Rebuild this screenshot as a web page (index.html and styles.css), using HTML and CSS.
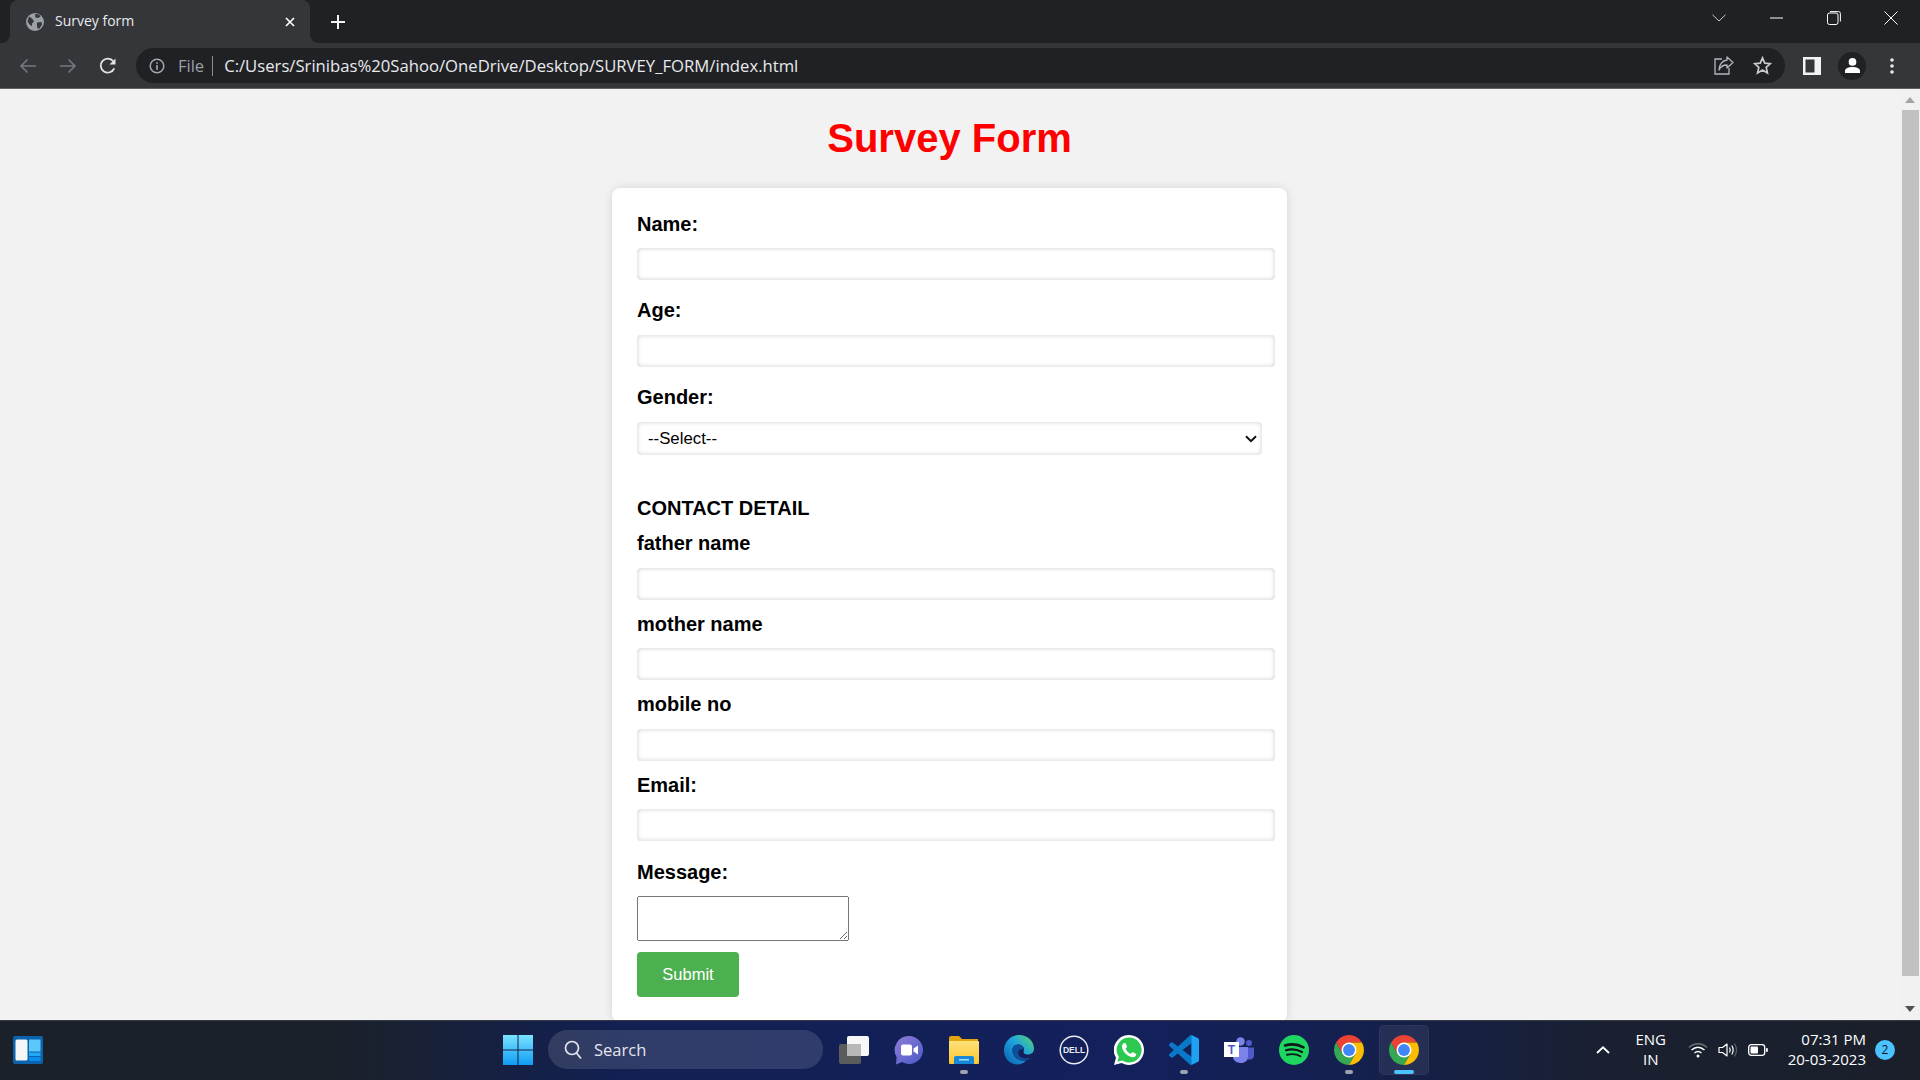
FILE: index.html
```html
<!DOCTYPE html>
<html lang="en">
<head>
<meta charset="utf-8">
<title>Survey form</title>
<link rel="stylesheet" href="styles.css">
</head>
<body>
<div class="window">
  <header class="tabstrip">
    <div class="tab">
      <svg class="favicon" viewBox="0 0 18 18"><circle cx="9" cy="9" r="9" fill="#9aa0a6"/><path d="M3 3.5 6.5 6 8 8.5 6 10.5 6 13 4 12 1.5 8.5ZM9 1 13 1.5 14.5 3.5 12 5 9.5 4.5ZM11 9.5 15.5 9 16 11.5 13.5 15.5 11.5 15.5 11 12.5Z" fill="#35363a"/></svg>
      <span class="tab-title">Survey form</span>
      <svg class="tab-close" viewBox="0 0 10 10"><path d="M1 1 9 9M9 1 1 9" stroke="#fff" stroke-width="1.7"/></svg>
    </div>
    <div class="new-tab"><svg viewBox="0 0 14 14" width="14" height="14"><path d="M7 0V14M0 7H14" stroke="#f1f3f4" stroke-width="2"/></svg></div>
    <div class="win-controls">
      <div class="win-btn"><svg viewBox="0 0 14 8" width="14" height="8"><path d="M.5.8 7 7 13.5.8" fill="none" stroke="#c8cacc" stroke-width="1"/></svg></div>
      <div class="win-btn"><svg viewBox="0 0 13 2" width="13" height="2"><path d="M0 1H13" stroke="#fff" stroke-width="1"/></svg></div>
      <div class="win-btn"><svg viewBox="0 0 14 14" width="14" height="14"><rect x=".5" y="2" width="10.5" height="11.5" rx="2" fill="none" stroke="#fff"/><path d="M3 .6H11.5Q13.4.6 13.4 2.5V10.5" fill="none" stroke="#fff"/></svg></div>
      <div class="win-btn"><svg viewBox="0 0 14 14" width="14" height="14"><path d="M.5.5 13.5 13.5M13.5.5 .5 13.5" stroke="#fff" stroke-width="1"/></svg></div>
    </div>
  </header>

  <nav class="toolbar">
    <div class="nav-btn"><svg viewBox="0 0 18 16" width="18" height="16"><path d="M17 8H2M8.5 1.5 2 8l6.5 6.5" fill="none" stroke="#75787c" stroke-width="1.6"/></svg></div>
    <div class="nav-btn"><svg viewBox="0 0 18 16" width="18" height="16"><path d="M1 8H16M9.500 1.500 16 8l-6.500 6.500" fill="none" stroke="#75787c" stroke-width="1.600"/></svg></div>
    <div class="nav-btn"><svg viewBox="0 0 18 18" width="18" height="18"><path d="M15.200 11.300A7 7 0 1 1 14.300 4.300" fill="none" stroke="#e3e5e8" stroke-width="1.800"/><path d="M16.500 1.500V7.500H10.500Z" fill="#e3e5e8"/></svg></div>
    <div class="omnibox">
      <svg class="info" viewBox="0 0 16 16" width="16" height="16"><circle cx="8" cy="8" r="6.800" fill="none" stroke="#a4a7ab" stroke-width="1.500"/><rect x="7.200" y="7" width="1.600" height="4.800" fill="#a4a7ab"/><rect x="7.200" y="4.200" width="1.600" height="1.600" fill="#a4a7ab"/></svg>
      <span class="scheme">File</span>
      <span class="divider"></span>
      <span class="url">C:/Users/Srinibas%20Sahoo/OneDrive/Desktop/SURVEY_FORM/index.html</span>
      <div class="omni-actions">
        <div class="omni-btn"><svg viewBox="0 0 20 19" width="20" height="19"><path d="M8 3H1V18H15V12" fill="none" stroke="#b3b6ba" stroke-width="1.300"/><path d="M13 1 19 6.500 13 12V9C9 9 6.500 10.500 5 14 5 9 8 4.500 13 4Z" fill="none" stroke="#b3b6ba" stroke-width="1.300" stroke-linejoin="round"/></svg></div>
        <div class="omni-btn"><svg viewBox="0 0 20 20" width="19" height="19"><path d="M10 2 12.400 7.500 18.300 8 13.900 12 15.200 17.900 10 14.800 4.800 17.900 6.100 12 1.700 8 7.600 7.500Z" fill="none" stroke="#c7cacd" stroke-width="1.800" stroke-linejoin="miter"/></svg></div>
      </div>
    </div>
    <div class="tool-btn"><svg viewBox="0 0 18 18" width="18" height="18"><rect width="18" height="18" fill="#f1f3f4"/><rect x="2.500" y="2.500" width="9" height="13" fill="#35363a"/></svg></div>
    <div class="tool-btn"><span class="avatar"><svg viewBox="0 0 18 16" width="17" height="15"><circle cx="9" cy="4.200" r="4.100" fill="#fff"/><path d="M1 16V13.500C1 11 5 9.500 9 9.500S17 11 17 13.500V16Z" fill="#fff"/></svg></span></div>
    <div class="tool-btn"><svg viewBox="0 0 4 16" width="4" height="16"><circle cx="2" cy="2" r="1.800" fill="#e8eaed"/><circle cx="2" cy="8" r="1.800" fill="#e8eaed"/><circle cx="2" cy="14" r="1.800" fill="#e8eaed"/></svg></div>
  </nav>

  <div class="viewport">
    <main class="page">
      <h1 class="title">Survey Form</h1>
      <form class="card">
        <div class="field">
          <label class="label gap-12">Name:</label>
          <input class="text-input" type="text">
        </div>
        <div class="field">
          <label class="label gap-13">Age:</label>
          <input class="text-input" type="text">
        </div>
        <div class="field field-gender">
          <label class="label gap-13">Gender:</label>
          <select class="select"><option>--Select--</option></select>
        </div>
        <h2 class="section">CONTACT DETAIL</h2>
        <div class="field field-tight">
          <label class="label gap-13">father name</label>
          <input class="text-input" type="text">
        </div>
        <div class="field field-tight">
          <label class="label gap-12">mother name</label>
          <input class="text-input" type="text">
        </div>
        <div class="field field-tight">
          <label class="label gap-13">mobile no</label>
          <input class="text-input" type="text">
        </div>
        <div class="field field-email">
          <label class="label gap-12">Email:</label>
          <input class="text-input" type="text">
        </div>
        <div class="field field-message">
          <label class="label gap-12">Message:</label>
          <textarea class="textarea"></textarea>
        </div>
        <button class="submit" type="button">Submit</button>
      </form>
    </main>
    <aside class="scrollbar">
      <svg class="arrow-up" viewBox="0 0 10 6" width="10" height="6"><path d="M5 0 10 6H0Z" fill="#a3a3a3"/></svg>
      <div class="thumb"></div>
      <svg class="arrow-down" viewBox="0 0 10 6" width="10" height="6"><path d="M0 0H10L5 6Z" fill="#505050"/></svg>
    </aside>
  </div>

  <footer class="taskbar">
    <div class="widgets">
      <svg viewBox="0 0 30 28" width="30" height="28"><rect width="30" height="28" rx="2" fill="#0b63ad"/><rect x="2.500" y="3.500" width="12" height="21" rx="1.500" fill="#f5f6f7"/><rect x="16" y="3.500" width="11.500" height="12" fill="#5cc8fa"/><rect x="16" y="16.500" width="11.500" height="3.500" fill="#25a8f4"/><rect x="16" y="21" width="11.500" height="4" fill="#0a8cec"/></svg>
    </div>
    <div class="task-item start">
      <svg viewBox="0 0 30 30" width="30" height="30"><defs><linearGradient id="win" x1="0" y1="0" x2="0" y2="1"><stop offset="0" stop-color="#7ae3ff"/><stop offset="1" stop-color="#0f9cf5"/></linearGradient></defs><path d="M0 0H14.500V14.500H0ZM15.500 0H30V14.500H15.500ZM0 15.500H14.500V30H0ZM15.500 15.500H30V30H15.500Z" fill="url(#win)"/></svg>
    </div>
    <div class="search">
      <svg viewBox="0 0 18 20" width="18" height="20"><circle cx="8" cy="8" r="6.500" fill="none" stroke="#e4e6ee" stroke-width="1.700"/><path d="M12.500 13 17 18.500" stroke="#e4e6ee" stroke-width="1.700"/></svg>
      <span class="search-text">Search</span>
    </div>
    <div class="task-list">
      <div class="task-item">
        <svg viewBox="0 0 30 28" width="30" height="28"><rect x="0" y="8" width="22" height="20" rx="2" fill="#5c5c5c"/><rect x="8" y="0" width="22" height="20" rx="2" fill="#f7f7f7"/><rect x="8" y="8" width="14" height="12" fill="#b8b8b8"/></svg>
      </div>
      <div class="task-item">
        <svg viewBox="0 0 30 30" width="30" height="30"><defs><linearGradient id="meet" x1="0" y1="0" x2="1" y2="1"><stop offset="0" stop-color="#8f7ed8"/><stop offset="1" stop-color="#4a58c8"/></linearGradient></defs><path d="M15 1A14 14 0 1 1 8 27.100L2 29.500 2.600 22A14 14 0 0 1 15 1Z" fill="url(#meet)"/><rect x="7" y="9.500" width="11" height="11" rx="2" fill="#fff"/><path d="M19.500 13.500 24 10.500V19.500L19.500 16.500Z" fill="#fff"/></svg>
      </div>
      <div class="task-item">
        <svg viewBox="0 0 30 28" width="30" height="28"><defs><linearGradient id="fold" x1="0" y1="0" x2="0" y2="1"><stop offset="0" stop-color="#ffe27a"/><stop offset="1" stop-color="#fbc52f"/></linearGradient></defs><path d="M0 2Q0 0 2 0H10L13 3H29V8H0Z" fill="#e5a50e"/><rect y="5" width="30" height="23" rx="1" fill="url(#fold)"/><path d="M5 28V22Q5 20 7 20H23Q25 20 25 22V28Z" fill="#1787d8"/><rect x="10" y="23" width="10" height="1.500" fill="#9fdcff"/></svg>
        <span class="dot"></span>
      </div>
      <div class="task-item">
        <svg viewBox="0 0 30 30" width="30" height="30"><defs><linearGradient id="edge" x1="0" y1="1" x2="1" y2="0"><stop offset="0" stop-color="#0b5cab"/><stop offset=".55" stop-color="#1fa3e0"/><stop offset="1" stop-color="#58d668"/></linearGradient></defs><path d="M0 14C1 5.500 8 0 15.500 0 24 0 30 6.500 30 13.500 30 18 26.500 19.500 23.500 19.500 19.500 19.500 19 17 20 15 20.500 12 17.500 9.500 14 9.500 10 9.500 8 13 8.500 16.500 9.500 23 16 27 22 25.500 18.500 29.500 13 30.500 8.500 28.500 3 26.500-.5 20.500 0 14Z" fill="url(#edge)"/><path d="M8.500 16.500C9.500 23 16 27 22 25.500 24 25 25.500 24 26.500 22.500 21 25 16 23 14.500 19.500 13 16 16.500 13.500 19.500 14.500 20 12 17.500 9.500 14 9.500 10 9.500 8 13 8.500 16.500Z" fill="#0e4f9c"/></svg>
      </div>
      <div class="task-item">
        <svg viewBox="0 0 30 30" width="30" height="30"><circle cx="15" cy="15" r="13.800" fill="none" stroke="#e9ebef" stroke-width="1.500"/><text x="15" y="18" class="dell-text" text-anchor="middle">DELL</text></svg>
      </div>
      <div class="task-item">
        <svg viewBox="0 0 30 30" width="30" height="30"><path d="M15 0A15 15 0 1 1 7.500 28L0 30 2 22.700A15 15 0 0 1 15 0Z" fill="#fff"/><path d="M15 2.500A12.500 12.500 0 1 1 8.300 25.500L3.500 26.700 4.800 22A12.500 12.500 0 0 1 15 2.500Z" fill="#2cc84f"/><path d="M10.500 8C9.300 8 8 9.500 8 11.500 8 16 13.500 22 19 22.300 21 22.300 22.300 20.800 22.300 19.300 22.300 18.800 19.300 17.200 18.500 17.200 17.800 17.200 17.300 18.700 16.700 18.700 15 18.700 11.700 15 11.700 13.800 11.700 13 13 12.600 13 11.800 13 11 11.800 8 11 8Z" fill="#fff"/></svg>
      </div>
      <div class="task-item">
        <svg viewBox="0 0 24 24" width="30" height="30"><path d="M23.150 2.587 18.210.21a1.494 1.494 0 0 0-1.705.29l-9.460 8.630-4.120-3.128a.999.999 0 0 0-1.276.057L.327 7.261A1 1 0 0 0 .326 8.740L3.899 12 .326 15.260a1 1 0 0 0 .001 1.479L1.650 17.940a.999.999 0 0 0 1.276.057l4.120-3.128 9.460 8.630a1.492 1.492 0 0 0 1.704.29l4.942-2.377A1.500 1.500 0 0 0 24 20.060V3.939a1.500 1.500 0 0 0-.850-1.352zm-5.146 14.861L10.826 12l7.178-5.448v10.896z" fill="#0a78c8"/><path d="M18.004.05 18.210.21 23.150 2.587A1.500 1.500 0 0 1 24 3.939V20.060a1.500 1.500 0 0 1-.850 1.356L18.210 23.790 18.004 23.900V0Z" fill="#1ea2f1"/></svg>
        <span class="dot"></span>
      </div>
      <div class="task-item">
        <svg viewBox="0 0 30 26" width="30" height="26"><circle cx="25" cy="6" r="3" fill="#5059c9"/><path d="M19.500 10.500H30V18C30 22 27 23 24 22.500Z" fill="#5059c9"/><circle cx="16.500" cy="4.500" r="4.300" fill="#7b83eb"/><path d="M9 10H24V20C24 24 20 26 16.500 26 12.500 26 9 23 9 20Z" fill="#7b83eb"/><rect x="0" y="5" width="15" height="15" fill="#fff"/><text x="7.500" y="17" class="teams-text" text-anchor="middle">T</text></svg>
      </div>
      <div class="task-item">
        <svg viewBox="0 0 30 30" width="30" height="30"><circle cx="15" cy="15" r="15" fill="#1ed760"/><path d="M6 10.500C12 8.800 19 9.200 24.500 12.300" fill="none" stroke="#10171a" stroke-width="2.600" stroke-linecap="round"/><path d="M7 15.200C12 13.900 18 14.300 23 17" fill="none" stroke="#10171a" stroke-width="2.200" stroke-linecap="round"/><path d="M8 19.700C12.500 18.700 17.500 19 21.500 21.300" fill="none" stroke="#10171a" stroke-width="1.900" stroke-linecap="round"/></svg>
      </div>
      <div class="task-item">
        <svg viewBox="0 0 48 48" width="30" height="30"><path d="M24 24 13.600 30 3.220 12A24 24 0 0 1 44.780 12H24Z" fill="#ea4335"/><path d="M24 24 34.400 30 24 48A24 24 0 0 1 3.220 12L13.600 30Z" fill="#34a853"/><path d="M24 24V12H44.780A24 24 0 0 1 24 48L34.400 30Z" fill="#fbbc04"/><circle cx="24" cy="24" r="12" fill="#fff"/><circle cx="24" cy="24" r="9.500" fill="#4285f4"/></svg>
        <span class="dot"></span>
      </div>
      <div class="task-item active">
        <svg viewBox="0 0 48 48" width="30" height="30"><path d="M24 24 13.600 30 3.220 12A24 24 0 0 1 44.780 12H24Z" fill="#ea4335"/><path d="M24 24 34.400 30 24 48A24 24 0 0 1 3.220 12L13.600 30Z" fill="#34a853"/><path d="M24 24V12H44.780A24 24 0 0 1 24 48L34.400 30Z" fill="#fbbc04"/><circle cx="24" cy="24" r="12" fill="#fff"/><circle cx="24" cy="24" r="9.500" fill="#4285f4"/></svg>
        <span class="dot dot-active"></span>
      </div>
    </div>
    <div class="tray">
      <svg class="tray-chevron" viewBox="0 0 14 8" width="14" height="8"><path d="M1 7 7 1.300 13 7" fill="none" stroke="#fff" stroke-width="1.800"/></svg>
      <div class="lang"><span>ENG</span><span>IN</span></div>
      <svg class="tray-icon" viewBox="0 0 20 16" width="20" height="16"><path d="M1 5.500C6 .5 14 .5 19 5.500" fill="none" stroke="#6d7178" stroke-width="1.300"/><path d="M3.500 8C7.500 4.500 12.500 4.500 16.500 8" fill="none" stroke="#fff" stroke-width="1.500"/><path d="M6.500 11C8.500 9.300 11.500 9.300 13.500 11" fill="none" stroke="#fff" stroke-width="1.500"/><circle cx="10" cy="14" r="1.500" fill="#fff"/></svg>
      <svg class="tray-icon" viewBox="0 0 20 16" width="20" height="16"><path d="M1 5.500H4.500L9 2V14L4.500 10.500H1Z" fill="none" stroke="#fff" stroke-width="1.200" stroke-linejoin="round"/><path d="M11.500 5.500Q13 8 11.500 10.500M13.800 3.500Q16.500 8 13.800 12.500" fill="none" stroke="#fff" stroke-width="1.200"/><path d="M16.500 1.500Q20.500 8 16.500 14.500" fill="none" stroke="#5c6068" stroke-width="1.200"/></svg>
      <svg class="tray-icon" viewBox="0 0 20 12" width="20" height="12"><rect x=".7" y=".7" width="16" height="10.600" rx="2.500" fill="none" stroke="#fff" stroke-width="1.300"/><rect x="2.500" y="2.500" width="7.500" height="7" rx="1" fill="#fff"/><rect x="18" y="4" width="1.800" height="4" rx=".8" fill="#fff"/></svg>
      <div class="clock"><span>07:31 PM</span><span>20-03-2023</span></div>
      <span class="badge">2</span>
    </div>
  </footer>
</div>
</body>
</html>
```

FILE: styles.css
```css
* { box-sizing: border-box; }

html, body {
  margin: 0;
  height: 100%;
  overflow: hidden;
}

body {
  font-family: "Liberation Sans", Arial, sans-serif;
  color: #000;
}

.window {
  display: flex;
  flex-direction: column;
  width: 1920px;
  height: 1080px;
}

/* Browser chrome */
.tabstrip {
  display: flex;
  align-items: stretch;
  flex: 0 0 43px;
  padding-left: 10px;
  background: #202124;
}

.tab {
  position: relative;
  display: flex;
  align-items: center;
  width: 300px;
  padding: 0 15px 0 16px;
  background: #35363a;
  border-radius: 8px 8px 0 0;
}

.tab::before,
.tab::after {
  content: "";
  position: absolute;
  bottom: 0;
  width: 8px;
  height: 8px;
}

.tab::before {
  left: -8px;
  background: radial-gradient(circle at 0 0, transparent 7.5px, #35363a 8px);
}

.tab::after {
  right: -8px;
  background: radial-gradient(circle at 100% 0, transparent 7.5px, #35363a 8px);
}

.favicon {
  flex: none;
  width: 18px;
  height: 18px;
}

.tab-title {
  margin-left: 11px;
  padding-bottom: 2px;
  font: 14px "Open Sans", sans-serif;
  color: #e8eaed;
}

.tab-close {
  flex: none;
  width: 10px;
  height: 10px;
  margin-left: auto;
}

.new-tab {
  display: flex;
  align-items: center;
  justify-content: center;
  width: 36px;
  margin-left: 10px;
}

.win-controls {
  display: flex;
  margin-left: auto;
}

.win-btn {
  display: flex;
  align-items: center;
  justify-content: center;
  width: 57.5px;
  height: 36px;
}

.toolbar {
  display: flex;
  align-items: center;
  flex: 0 0 46px;
  padding: 0 8px;
  background: #35363a;
  border-bottom: 1px solid #5f6063;
}

.nav-btn,
.tool-btn {
  display: flex;
  flex: none;
  align-items: center;
  justify-content: center;
  width: 40px;
  height: 36px;
}

.omnibox {
  display: flex;
  flex: 1;
  align-items: center;
  height: 35px;
  margin: 0 7px 0 8px;
  padding: 0 3px 0 13px;
  background: #202124;
  border-radius: 18px;
}

.info { flex: none; }

.scheme {
  margin-left: 13px;
  padding-bottom: 1px;
  font: 16.5px "Open Sans", sans-serif;
  color: #9aa0a6;
}

.divider {
  width: 1px;
  height: 20px;
  margin: 0 11px 0 8px;
  background: #8a8d91;
}

.url {
  padding-bottom: 1px;
  font: 16.68px "Open Sans", sans-serif;
  color: #e8eaed;
  white-space: nowrap;
}

.omni-actions {
  display: flex;
  margin-left: auto;
}

.omni-btn {
  display: flex;
  align-items: center;
  justify-content: center;
  width: 39px;
  height: 32px;
}

.avatar {
  display: flex;
  align-items: center;
  justify-content: center;
  width: 28px;
  height: 28px;
  background: #202124;
  border-radius: 50%;
}

/* Page */
.viewport {
  display: flex;
  flex: 1;
  min-height: 0;
  background: #f2f2f2;
}

.page {
  flex: 1;
  min-width: 0;
  padding: 26px 1px 0 0;
  overflow: hidden;
}

.title {
  margin: 0 0 27px;
  font-size: 40px;
  font-weight: 700;
  line-height: 46px;
  text-align: center;
  color: #f00;
}

.card {
  width: 675px;
  margin: 0 auto;
  padding: 25px;
  background: #fff;
  border-radius: 8px;
  box-shadow: 0 0 10px rgba(0, 0, 0, .12);
}

.field { margin-bottom: 19px; }
.field-gender { margin-bottom: 42px; }
.field-tight { margin-bottom: 13px; }
.field-email { margin-bottom: 20px; }
.field-message { margin-bottom: 11px; }

.label {
  display: block;
  font-size: 20px;
  font-weight: 700;
  line-height: 23px;
}

.gap-12 { margin-bottom: 12px; }
.gap-13 { margin-bottom: 13px; }

.section {
  margin: 0 0 12px;
  font-size: 20px;
  font-weight: 700;
  line-height: 23px;
}

.text-input,
.select {
  display: block;
  height: 32px;
  border: 0;
  border-radius: 4px;
  background-color: #fff;
  box-shadow: inset 0 0 5px rgba(0, 0, 0, .2);
}

.text-input { width: calc(100% + 13px); }

.select {
  width: 100%;
  height: 33px;
  padding: 0 8px 0 11px;
  appearance: none;
  background-image: url("data:image/svg+xml,%3Csvg xmlns='http://www.w3.org/2000/svg' viewBox='0 0 12 8'%3E%3Cpath d='M1 1.200 6 6.200 11 1.200' fill='none' stroke='%23111' stroke-width='2'/%3E%3C/svg%3E");
  background-repeat: no-repeat;
  background-position: right 5px center;
  background-size: 12px 8px;
  font: 16.8px "Liberation Sans", Arial, sans-serif;
  color: #000;
}

.textarea {
  display: block;
  width: 212px;
  height: 45px;
}

.submit {
  display: block;
  width: 102px;
  height: 45px;
  border: 0;
  border-radius: 4px;
  background: #4caf50;
  font: 16.5px "Liberation Sans", Arial, sans-serif;
  color: #fff;
}

/* Scrollbar */
.scrollbar {
  display: flex;
  flex: 0 0 20px;
  flex-direction: column;
  align-items: center;
  padding-top: 8px;
  background: #f1f1f1;
}

.thumb {
  flex: 0 0 866px;
  width: 17px;
  margin-top: 7px;
  background: #c1c1c1;
}

.arrow-down { margin-top: 30px; }

/* Taskbar */
.taskbar {
  display: flex;
  align-items: center;
  flex: 0 0 60px;
  padding: 0 0 2px 13px;
  background: linear-gradient(90deg, #1b2129 0, #1b2129 17%, #122052 32%, #13205c 58%, #14204f 70%, #1a2030 84%, #1a1f2a 100%);
  border-top: 1px solid #363a45;
}

.widgets {
  display: flex;
  flex: none;
  width: 30px;
  margin-right: 447px;
}

.task-item {
  position: relative;
  display: flex;
  flex: none;
  align-items: center;
  justify-content: center;
  width: 55px;
  height: 50px;
}

.task-item.active::before {
  content: "";
  position: absolute;
  inset: 0 2.5px;
  background: rgba(255, 255, 255, .07);
  border-radius: 5px;
  box-shadow: inset 0 0 0 1px rgba(255, 255, 255, .04);
}

.task-item.active svg { position: relative; }

.search {
  display: flex;
  flex: none;
  align-items: center;
  width: 275px;
  height: 39px;
  margin: 0 3.5px 0 3px;
  padding-left: 16px;
  background: rgba(255, 255, 255, .13);
  border-radius: 20px;
}

.search-text {
  margin-left: 12px;
  font: 16.5px "Open Sans", sans-serif;
  color: #e4e6ee;
}

.task-list {
  display: flex;
  flex: none;
}

.dot {
  position: absolute;
  bottom: 1px;
  left: 50%;
  width: 8px;
  height: 4px;
  margin-left: -4px;
  background: #9ea3ad;
  border-radius: 2px;
}

.dot-active {
  width: 20px;
  margin-left: -10px;
  background: #4cc2ff;
}

.dell-text {
  font: 700 8.500px "Liberation Sans", sans-serif;
  fill: #e9ebef;
}

.teams-text {
  font: 700 12px "Liberation Sans", sans-serif;
  fill: #4f58ca;
}

.tray {
  display: flex;
  align-items: center;
  margin-left: auto;
  padding-right: 25px;
  color: #fff;
  font: 15px "Open Sans", sans-serif;
}

.tray-chevron { margin-right: 24px; }

.lang,
.clock {
  display: flex;
  flex-direction: column;
  line-height: 19.500px;
}

.lang {
  align-items: center;
  width: 34px;
  margin-right: 20px;
}

.tray-icon { margin-right: 10px; }
.tray-icon:last-of-type { margin-right: 0; }

.clock {
  align-items: flex-end;
  margin-left: 20px;
  white-space: nowrap;
}

.badge {
  display: flex;
  align-items: center;
  justify-content: center;
  width: 20px;
  height: 20px;
  margin-left: 9px;
  background: #4cc2ff;
  border-radius: 50%;
  color: #10151c;
  font-size: 12px;
}
```
